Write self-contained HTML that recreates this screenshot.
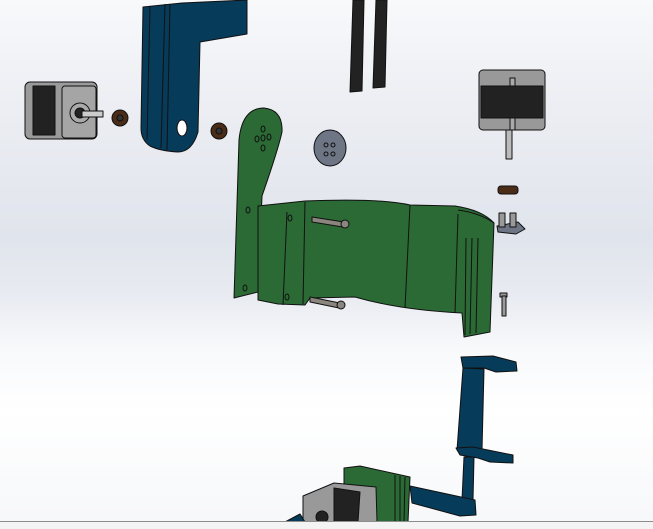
<!DOCTYPE html>
<html><head><style>
html,body{margin:0;padding:0;width:653px;height:528px;overflow:hidden}
body{background:linear-gradient(180deg,#f8f9fb 0%,#eceef3 20%,#e0e4ec 45%,#e8ebf1 56%,#f8f9fb 66%,#ffffff 78%,#f7f8fa 98%);}
svg{position:absolute;left:0;top:0}
</style></head><body>
<svg width="653" height="528" viewBox="0 0 653 528" stroke="#111" stroke-width="1" stroke-linejoin="round">
<path d="M143,7 L182,3 L247,0 L247,34 L200,42 L198,132 Q192,152 178,152 Q160,151 150,146 Q141,140 141,128 Z" fill="#073b5a"/>
<path d="M150,6 L147,140 M165,4 L161,148 M170,5 L167,150" fill="none"/>
<ellipse cx="182" cy="128" rx="5" ry="8" fill="#fff"/>
<rect x="25" y="82" width="72" height="57" rx="5" fill="#9a9a9a"/>
<rect x="33" y="86" width="22" height="49" fill="#222"/>
<rect x="62" y="86" width="34" height="52" rx="3" fill="#a5a5a5"/>
<circle cx="80" cy="113" r="10" fill="#aaa"/><circle cx="80" cy="113" r="5" fill="#222"/>
<rect x="82" y="111" width="21" height="6" fill="#ccc"/>
<circle cx="120" cy="118" r="8" fill="#4a2c17"/><circle cx="120" cy="118" r="3" fill="#333"/>
<circle cx="219" cy="131" r="8" fill="#4a2c17"/><circle cx="219" cy="131" r="3" fill="#333"/>
<path d="M239,140 Q242,108 264,108 Q283,110 282,132 Q278,150 262,196 L258,292 L234,298 Z" fill="#2b6a35"/>
<g fill="none"><ellipse cx="263" cy="129" rx="2" ry="3"/><ellipse cx="257" cy="139" rx="2" ry="3"/><ellipse cx="263" cy="138" rx="2" ry="3"/><ellipse cx="269" cy="137" rx="2" ry="3"/><ellipse cx="263" cy="148" rx="2" ry="3"/><ellipse cx="248" cy="210" rx="2" ry="3"/><ellipse cx="245" cy="288" rx="2" ry="3"/></g>
<ellipse cx="330" cy="148" rx="16" ry="18" fill="#6e7584"/>
<circle cx="326" cy="145" r="2" fill="none"/><circle cx="333" cy="145" r="2" fill="none"/><circle cx="326" cy="154" r="2" fill="none"/><circle cx="333" cy="154" r="2" fill="none"/>
<path d="M353,0 L364,0 L362,91 L350,92 Z" fill="#222"/>
<path d="M376,0 L387,0 L385,87 L373,88 Z" fill="#222"/>
<rect x="479" y="70" width="66" height="60" rx="4" fill="#999"/>
<rect x="481" y="86" width="62" height="32" fill="#222"/>
<rect x="510" y="78" width="5" height="8" fill="#aaa"/><rect x="510" y="118" width="5" height="12" fill="#aaa"/>
<rect x="506" y="130" width="6" height="29" fill="#bbb"/>
<rect x="498" y="186" width="20" height="8" rx="3" fill="#4a2c17"/>
<path d="M258,206 L305,201 Q380,198 410,205 L455,206 Q482,210 494,223 L490,332 L464,337 L462,313 Q400,310 355,297 L310,298 L305,305 L278,304 L258,300 Z" fill="#2b6a35"/>
<path d="M287,212 L283,305 M305,202 L303,304 M410,205 L405,308 M458,214 L455,313 M466,238 L465,335 M472,238 L470,334 M478,238 L476,333 M458,210 Q480,213 494,223" fill="none"/>
<ellipse cx="290" cy="218" rx="2" ry="3" fill="none"/><ellipse cx="287" cy="297" rx="2" ry="3" fill="none"/>
<path d="M312,217 L344,222 L343,227 L312,222 Z" fill="#8a857e"/><circle cx="345" cy="224" r="4" fill="#8a857e"/>
<path d="M310,297 L340,303 L339,308 L310,302 Z" fill="#8a857e"/><circle cx="341" cy="305" r="4" fill="#8a857e"/>
<path d="M497,226 L518,222 L525,229 L516,234 L498,232 Z" fill="#6e7584"/>
<rect x="499" y="213" width="6" height="14" fill="#999"/><rect x="510" y="213" width="6" height="14" fill="#999"/>
<rect x="500" y="293" width="7" height="4" fill="#999"/><rect x="502" y="296" width="4" height="20" fill="#999"/>
<path d="M461,357 L493,356 L516,362 L517,371 L496,372 L484,368 L463,368 Z" fill="#073b5a"/>
<path d="M463,368 L484,369 L482,450 L457,450 Z" fill="#073b5a"/>
<path d="M456,448 L473,447 L513,455 L513,463 L490,462 L478,458 L460,455 Z" fill="#073b5a"/>
<path d="M464,457 L474,457 L473,500 L462,500 Z" fill="#073b5a"/>
<path d="M410,486 L461,497 L475,500 L476,515 L460,516 L412,503 Z" fill="#073b5a"/>
<path d="M344,468 L360,466 L410,477 L408,522 L344,522 Z" fill="#2b6a35"/>
<path d="M395,475 L395,522 M400,476 L400,522 M405,477 L404,522" fill="none"/>
<path d="M303,496 L334,483 L376,487 L377,522 L303,522 Z" fill="#999"/>
<path d="M334,488 L360,492 L358,522 L334,522 Z" fill="#222"/>
<circle cx="322" cy="517" r="6" fill="#222"/>
<path d="M285,522 L300,514 L305,522 Z" fill="#073b5a"/>
</svg>
<div style="position:absolute;left:0;top:521px;width:653px;height:7px;background:#f4f4f4;border-top:1px solid #8c8c8c"></div>
</body></html>
